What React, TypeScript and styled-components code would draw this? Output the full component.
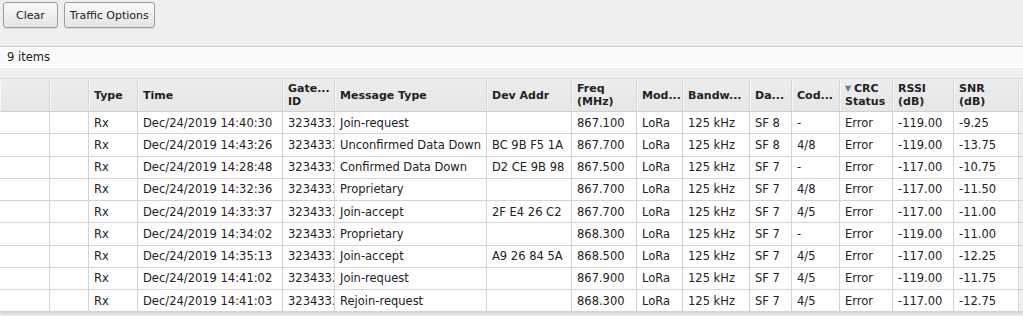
import React from "react";
import styled, { createGlobalStyle } from "styled-components";

const GlobalStyle = createGlobalStyle`
  html, body {
    margin: 0;
    padding: 0;
    background: #efefef;
  }
  body {
    font-family: "DejaVu Sans", Verdana, sans-serif;
    color: #222;
  }
  * { box-sizing: border-box; }
`;

const COLS = "50px 39px 49px 145px 52px 152px 85px 65px 46px 67px 42px 48px 53px 61px 65px 4px";

const Page = styled.div`
  width: 1023px;
  height: 316px;
  overflow: hidden;
  display: flex;
  flex-direction: column;
`;

const Toolbar = styled.div`
  display: flex;
  gap: 6px;
  padding: 2px 0 0 3px;
  height: 46px;
`;

const Button = styled.button<{ $pad?: number }>`
  height: 26px;
  padding: 0 ${(p) => p.$pad ?? 12}px;
  border: 1px solid #9c9c9c;
  border-radius: 3px;
  background: linear-gradient(#fbfbfb, #e4e4e4);
  box-shadow: 0 1px 1px rgba(0, 0, 0, 0.08);
  font-family: "DejaVu Sans", "Lucida Grande", sans-serif;
  font-size: 11px;
  color: #222;
`;

const ItemsBar = styled.div`
  height: 22px;
  border-top: 1px solid #c9c9c9;
  border-bottom: 1px solid #ffffff;
  background: #fafafa;
  font-size: 11.5px;
  padding: 3px 0 0 7px;
`;

const Gap = styled.div`
  height: 10px;
`;

const Table = styled.div`
  display: flex;
  flex-direction: column;
  box-shadow: 0 2px 3px rgba(0, 0, 0, 0.12);
`;

const HeaderRow = styled.div`
  display: grid;
  grid-template-columns: ${COLS};
  height: 34px;
  border-top: 1px solid #dcdcdc;
  border-bottom: 1px solid #cfcfcf;
  background: linear-gradient(#ededed, #e6e6e6);
`;

const HeadCell = styled.div`
  border-right: 1px solid #d6d6d6;
  box-shadow: inset 1px 0 0 #f7f7f7;
  padding: 0 2px 0 5px;
  display: flex;
  align-items: center;
  font-weight: bold;
  font-size: 11px;
  line-height: 13px;
  color: #222;
  overflow: hidden;
`;

const HeadText = styled.span`
  overflow: hidden;
  white-space: pre;
`;

const Sort = styled.span`
  color: #777;
  font-size: 8px;
  vertical-align: 1px;
`;

const Row = styled.div`
  display: grid;
  grid-template-columns: ${COLS};
  height: 22.25px;
  background: #fff;
  border-bottom: 1px solid #d4d4d4;
`;

const Cell = styled.div<{ $filler?: boolean }>`
  border-right: 1px solid ${(p) => (p.$filler ? "transparent" : "#d4d4d4")};
  padding: 0 0 0 5px;
  display: flex;
  align-items: center;
  font-size: 11.5px;
  white-space: nowrap;
  overflow: hidden;
  color: #222;
  background: ${(p) => (p.$filler ? "#efefef" : "transparent")};
`;

type Head = { label: string; sort?: boolean };

const headers: Head[] = [
  { label: "" },
  { label: "" },
  { label: "Type" },
  { label: "Time" },
  { label: "Gate...\nID" },
  { label: "Message Type" },
  { label: "Dev Addr" },
  { label: "Freq\n(MHz)" },
  { label: "Mod..." },
  { label: "Bandw..." },
  { label: "Da..." },
  { label: "Cod..." },
  { label: "CRC\nStatus", sort: true },
  { label: "RSSI\n(dB)" },
  { label: "SNR\n(dB)" },
  { label: "" },
];

const rows: string[][] = [
  ["Dec/24/2019 14:40:30", "Join-request", "", "867.100", "SF 8", "-", "-119.00", "-9.25"],
  ["Dec/24/2019 14:43:26", "Unconfirmed Data Down", "BC 9B F5 1A", "867.700", "SF 8", "4/8", "-119.00", "-13.75"],
  ["Dec/24/2019 14:28:48", "Confirmed Data Down", "D2 CE 9B 98", "867.500", "SF 7", "-", "-117.00", "-10.75"],
  ["Dec/24/2019 14:32:36", "Proprietary", "", "867.700", "SF 7", "4/8", "-117.00", "-11.50"],
  ["Dec/24/2019 14:33:37", "Join-accept", "2F E4 26 C2", "867.700", "SF 7", "4/5", "-117.00", "-11.00"],
  ["Dec/24/2019 14:34:02", "Proprietary", "", "868.300", "SF 7", "-", "-119.00", "-11.00"],
  ["Dec/24/2019 14:35:13", "Join-accept", "A9 26 84 5A", "868.500", "SF 7", "4/5", "-117.00", "-12.25"],
  ["Dec/24/2019 14:41:02", "Join-request", "", "867.900", "SF 7", "4/5", "-119.00", "-11.75"],
  ["Dec/24/2019 14:41:03", "Rejoin-request", "", "868.300", "SF 7", "4/5", "-117.00", "-12.75"],
];

export default function App() {
  return (
    <>
      <GlobalStyle />
      <Page>
        <Toolbar>
          <Button $pad={12}>Clear</Button>
          <Button $pad={5}>Traffic Options</Button>
        </Toolbar>
        <ItemsBar>9 items</ItemsBar>
        <Gap />
        <Table>
          <HeaderRow>
            {headers.map((h, i) => (
              <HeadCell key={i}>
                <HeadText>
                  {h.sort && <Sort>▼ </Sort>}
                  {h.label}
                </HeadText>
              </HeadCell>
            ))}
          </HeaderRow>
          {rows.map((r, i) => (
            <Row key={i}>
              <Cell />
              <Cell />
              <Cell>Rx</Cell>
              <Cell>{r[0]}</Cell>
              <Cell>3234333</Cell>
              <Cell>{r[1]}</Cell>
              <Cell>{r[2]}</Cell>
              <Cell>{r[3]}</Cell>
              <Cell>LoRa</Cell>
              <Cell>125 kHz</Cell>
              <Cell>{r[4]}</Cell>
              <Cell>{r[5]}</Cell>
              <Cell>Error</Cell>
              <Cell>{r[6]}</Cell>
              <Cell>{r[7]}</Cell>
              <Cell $filler />
            </Row>
          ))}
        </Table>
      </Page>
    </>
  );
}
